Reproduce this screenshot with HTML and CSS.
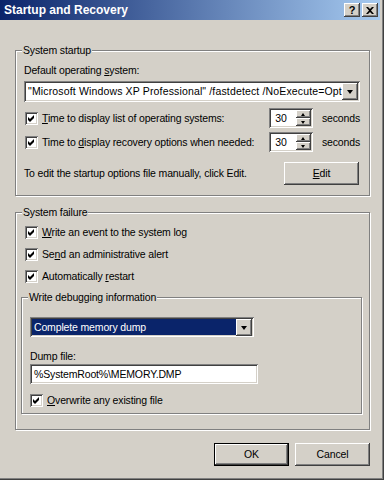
FILE: index.html
```html
<!DOCTYPE html>
<html>
  <head>
    <meta charset="UTF-8">
    <title>Startup and Recovery</title>
    <link rel="stylesheet" href="styles.css">
  </head>
  <body>
    <div class="window">
      <div class="titlebar">
        <span class="title">Startup and Recovery</span>
        <div class="caption-btns">
          <span class="cap-btn raised help">?</span>
          <span class="cap-btn raised">
            <svg width="8" height="7" viewBox="0 0 8 7"><path d="M0 0h2l2 2 2-2h2L5 3.5 8 7H6L4 5 2 7H0l3-3.5z" fill="#000"/></svg>
          </span>
        </div>
      </div>

      <div class="client">
        <div class="group startup">
          <span class="legend">System startup</span>
          <div class="text">Default operating <u>s</u>ystem:</div>
          <div class="combo os sunken">
            <span class="combo-text">"Microsoft Windows XP Professional" /fastdetect /NoExecute=OptIn</span>
            <span class="drop-btn raised"><span class="arrow"></span></span>
          </div>

          <div class="spin-row first">
            <div class="check">
              <span class="box sunken"><svg width="9" height="9" viewBox="0 0 9 9"><path d="M1 3l2 2 4-4v3l-4 4-2-2z" fill="#000"/></svg></span>
              <span><u>T</u>ime to display list of operating systems:</span>
            </div>
            <div class="spin sunken">
              <span class="spin-val">30</span>
              <span class="spin-btns">
                <span class="spin-btn raised"><span class="arrow up"></span></span>
                <span class="spin-btn raised"><span class="arrow small"></span></span>
              </span>
            </div>
            <span class="unit">seconds</span>
          </div>

          <div class="spin-row">
            <div class="check">
              <span class="box sunken"><svg width="9" height="9" viewBox="0 0 9 9"><path d="M1 3l2 2 4-4v3l-4 4-2-2z" fill="#000"/></svg></span>
              <span>Time to <u>d</u>isplay recovery options when needed:</span>
            </div>
            <div class="spin sunken">
              <span class="spin-val">30</span>
              <span class="spin-btns">
                <span class="spin-btn raised"><span class="arrow up"></span></span>
                <span class="spin-btn raised"><span class="arrow small"></span></span>
              </span>
            </div>
            <span class="unit">seconds</span>
          </div>

          <div class="edit-row">
            <span>To edit the startup options file manually, click Edit.</span>
            <span class="btn raised"><u>E</u>dit</span>
          </div>
        </div>

        <div class="group failure">
          <span class="legend">System failure</span>
          <div class="check row">
            <span class="box sunken"><svg width="9" height="9" viewBox="0 0 9 9"><path d="M1 3l2 2 4-4v3l-4 4-2-2z" fill="#000"/></svg></span>
            <span><u>W</u>rite an event to the system log</span>
          </div>
          <div class="check row">
            <span class="box sunken"><svg width="9" height="9" viewBox="0 0 9 9"><path d="M1 3l2 2 4-4v3l-4 4-2-2z" fill="#000"/></svg></span>
            <span>Se<u>n</u>d an administrative alert</span>
          </div>
          <div class="check row">
            <span class="box sunken"><svg width="9" height="9" viewBox="0 0 9 9"><path d="M1 3l2 2 4-4v3l-4 4-2-2z" fill="#000"/></svg></span>
            <span>Automatically <u>r</u>estart</span>
          </div>

          <div class="group debug">
            <span class="legend">Write debugging information</span>
            <div class="combo dump sunken">
              <span class="combo-text selected">Complete memory dump</span>
              <span class="drop-btn raised"><span class="arrow"></span></span>
            </div>
            <div class="text dump-label">Dump file:</div>
            <div class="field sunken">%SystemRoot%\MEMORY.DMP</div>
            <div class="check row overwrite">
              <span class="box sunken"><svg width="9" height="9" viewBox="0 0 9 9"><path d="M1 3l2 2 4-4v3l-4 4-2-2z" fill="#000"/></svg></span>
              <span><u>O</u>verwrite any existing file</span>
            </div>
          </div>
        </div>

        <div class="actions">
          <span class="btn raised default">OK</span>
          <span class="btn raised">Cancel</span>
        </div>
      </div>
    </div>
  </body>
</html>
```

FILE: styles.css
```css
html, body {
  margin: 0;
  background: #d4d0c8;
}
body {
  font-family: "Liberation Sans", Arial, sans-serif;
  font-size: 10.5px;
  letter-spacing: -0.15px;
  line-height: 13px;
  color: #000;
}
.window {
  box-sizing: border-box;
  width: 384px;
  height: 480px;
  padding: 0 4px 3px 0;
  background: #d4d0c8;
  box-shadow: inset -1px -1px #404040, inset -2px -2px #808080;
}

/* 3d edges */
.raised {
  background: #d4d0c8;
  box-shadow: inset -1px -1px #404040, inset 1px 1px #fff, inset -2px -2px #808080;
}
.sunken {
  background: #fff;
  box-shadow: inset 1px 1px #808080, inset -1px -1px #fff, inset 2px 2px #404040, inset -2px -2px #d4d0c8;
}

/* title bar */
.titlebar {
  height: 20px;
  display: flex;
  align-items: center;
  padding-left: 4px;
  background: linear-gradient(to right, #0a246a, #a6caf0);
}
.title {
  color: #fff;
  font-weight: bold;
  font-size: 12px;
  letter-spacing: 0;
}
.caption-btns {
  margin-left: auto;
  margin-right: 2px;
  display: flex;
  gap: 2px;
}
.cap-btn {
  width: 16px;
  height: 14px;
  display: flex;
  align-items: center;
  justify-content: center;
}
.help {
  font-weight: bold;
  font-size: 11px;
  line-height: 14px;
}

/* body */
.client {
  padding: 30px 10px 0 15px;
}
.group {
  box-sizing: border-box;
  position: relative;
  box-shadow: inset 1px 1px #fff, 1px 1px #fff;
  border: 1px solid #808080;
}
.legend {
  position: absolute;
  top: -7px;
  left: 6px;
  padding: 0 1px;
  background: #d4d0c8;
  white-space: nowrap;
}
u {
  text-decoration-thickness: 1px;
  text-underline-offset: 1px;
}

.startup {
  height: 146px;
  padding: 13px 9px 0 8px;
}
.combo {
  box-sizing: border-box;
  height: 21px;
  padding: 2px;
  display: flex;
}
.os {
  margin-top: 4px;
  width: 336px;
}
.os .combo-text {
  letter-spacing: 0.15px;
}
.combo-text {
  flex: 1;
  overflow: hidden;
  white-space: nowrap;
  line-height: 17px;
  padding-left: 2px;
}
.drop-btn {
  width: 16px;
  height: 17px;
  display: flex;
  align-items: center;
  justify-content: center;
}
.arrow {
  width: 0;
  height: 0;
  border-left: 3.5px solid transparent;
  border-right: 3.5px solid transparent;
  border-top: 4px solid #000;
}
.arrow.small {
  border-left-width: 2.5px;
  border-right-width: 2.5px;
  border-top-width: 3px;
}
.arrow.up {
  border-top: 0;
  border-left-width: 2.5px;
  border-right-width: 2.5px;
  border-bottom: 3px solid #000;
}

.spin-row {
  display: flex;
  align-items: center;
  height: 20px;
  margin-top: 4px;
}
.spin-row.first {
  margin-top: 6px;
}
.spin-row .check {
  width: 247px;
}
.check {
  display: flex;
  align-items: center;
  gap: 4px;
  padding-left: 1px;
  white-space: nowrap;
}
.box {
  width: 13px;
  height: 13px;
  display: flex;
  align-items: center;
  justify-content: center;
}
.spin {
  box-sizing: border-box;
  width: 44px;
  height: 20px;
  padding: 2px;
  display: flex;
}
.spin-val {
  flex: 1;
  line-height: 16px;
  padding-left: 4px;
}
.spin-btns {
  width: 15px;
  display: flex;
  flex-direction: column;
}
.spin-btn {
  flex: 1;
  display: flex;
  align-items: center;
  justify-content: center;
}
.unit {
  margin-left: 9px;
}

.edit-row {
  margin-top: 10px;
  display: flex;
  align-items: center;
  justify-content: space-between;
  width: 335px;
}
.btn {
  box-sizing: border-box;
  width: 75px;
  height: 23px;
  display: flex;
  align-items: center;
  justify-content: center;
}
.btn.default {
  box-shadow: inset 0 0 0 1px #000, inset -2px -2px #404040, inset 1px 1px #000, inset 2px 2px #fff, inset -3px -3px #808080;
}

.failure {
  margin-top: 16px;
  height: 218px;
  padding-top: 9px;
}
.row {
  height: 20px;
  margin: 0 0 2px 8px;
}
.debug {
  margin: 11px 7px 0 5px;
  height: 117px;
  padding: 19px 0 0 8px;
}
.dump {
  width: 224px;
  height: 20px;
}
.selected {
  background: #0a246a;
  color: #fff;
  line-height: 16px;
}
.dump-label {
  margin-top: 13px;
}
.field {
  box-sizing: border-box;
  width: 228px;
  height: 20px;
  margin-top: 1px;
  padding: 2px 4px;
  line-height: 16px;
}
.overwrite {
  margin: 6px 0 0 0;
  padding-left: 0;
}

.actions {
  display: flex;
  justify-content: flex-end;
  gap: 6px;
  margin-top: 13px;
}
```
